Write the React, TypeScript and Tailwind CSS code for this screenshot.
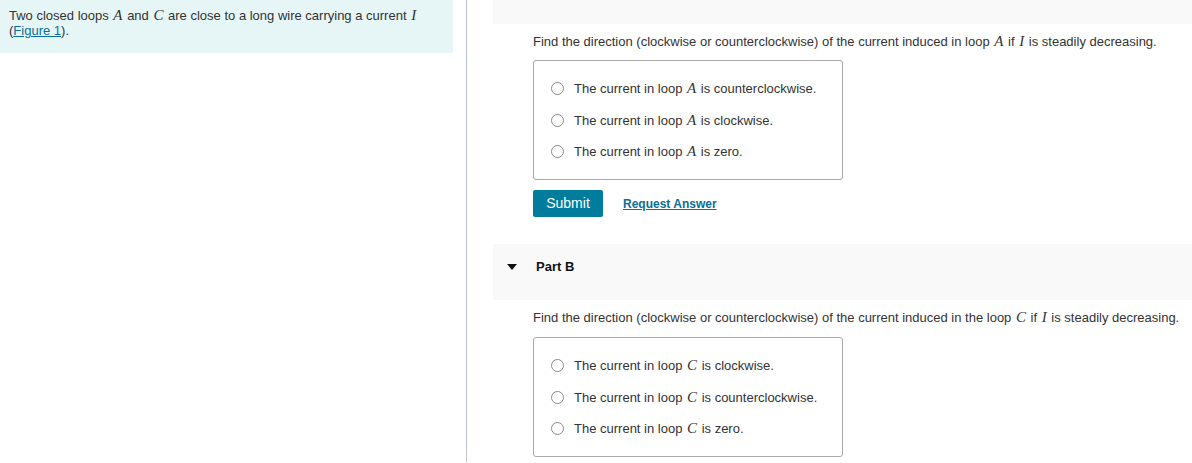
import React from "react";

const M = ({ children }: { children: React.ReactNode }) => (
  <span className="italic text-[15px] leading-[0] px-[1px]" style={{ fontFamily: '"Liberation Serif", "DejaVu Serif", serif' }}>
    {children}
  </span>
);

const Radio = ({ children }: { children: React.ReactNode }) => (
  <div className="flex items-center h-[31.5px]">
    <span className="inline-block w-[13px] h-[13px] rounded-full border border-[#8a8a8a] bg-white mr-[10px]" />
    <span className="text-[13px] text-[#333]">{children}</span>
  </div>
);

export default function App() {
  return (
    <div
      className="flex w-[1192px] h-[463px] bg-white text-[#333] overflow-hidden"
      style={{ fontFamily: '"Liberation Sans", Arial, sans-serif' }}
    >
      <div className="w-[467px] shrink-0 flex">
        <div className="w-[453px] shrink-0">
          <div className="bg-[#e6f6f6] h-[53px] pl-[9px] pt-[8px] text-[13px] leading-[15px] text-[#333]">
            Two closed loops <M>A</M> and <M>C</M> are close to a long wire carrying a current <M>I</M>
            <br />(<span className="text-[#0b6d9a] underline">Figure 1</span>).
          </div>
        </div>
        <div className="w-[13px]" />
        <div className="w-[1px] h-[462px] bg-[#b6c3da]" />
      </div>
      <div className="flex-1 pl-[26px]">
        <div className="h-[24px] bg-[#f9f9f9]" />
        <div className="pl-[40px]">
          <div className="pt-[11px] text-[13px] leading-[14px] whitespace-nowrap">
            Find the direction (clockwise or counterclockwise) of the current induced in loop <M>A</M> if <M>I</M> is steadily decreasing.
          </div>
          <div className="mt-[11px] w-[310px] h-[120px] border border-[#aaa] rounded-[3px] pl-[17px] pt-[12px]">
            <Radio>The current in loop <M>A</M> is counterclockwise.</Radio>
            <Radio>The current in loop <M>A</M> is clockwise.</Radio>
            <Radio>The current in loop <M>A</M> is zero.</Radio>
          </div>
          <div className="mt-[10px] flex items-center">
            <button className="w-[70px] h-[27px] bg-[#007c9c] text-white text-[14px] rounded-[2px]">Submit</button>
            <span className="ml-[20px] text-[12px] text-[#0b6d9a] underline font-bold">Request Answer</span>
          </div>
        </div>
        <div className="mt-[27px] h-[56px] bg-[#f9f9f9] flex items-start pt-[16px]">
          <span className="ml-[14px] mt-[4px] w-0 h-0 border-l-[5px] border-r-[5px] border-t-[6px] border-l-transparent border-r-transparent border-t-[#111]" />
          <span className="ml-[19px] text-[13px] font-bold text-[#111] leading-[14px]">Part B</span>
        </div>
        <div className="pl-[40px]">
          <div className="pt-[11px] text-[13px] leading-[14px] whitespace-nowrap">
            Find the direction (clockwise or counterclockwise) of the current induced in the loop <M>C</M> if <M>I</M> is steadily decreasing.
          </div>
          <div className="mt-[12px] w-[310px] h-[120px] border border-[#aaa] rounded-[3px] pl-[17px] pt-[12px]">
            <Radio>The current in loop <M>C</M> is clockwise.</Radio>
            <Radio>The current in loop <M>C</M> is counterclockwise.</Radio>
            <Radio>The current in loop <M>C</M> is zero.</Radio>
          </div>
        </div>
      </div>
    </div>
  );
}
